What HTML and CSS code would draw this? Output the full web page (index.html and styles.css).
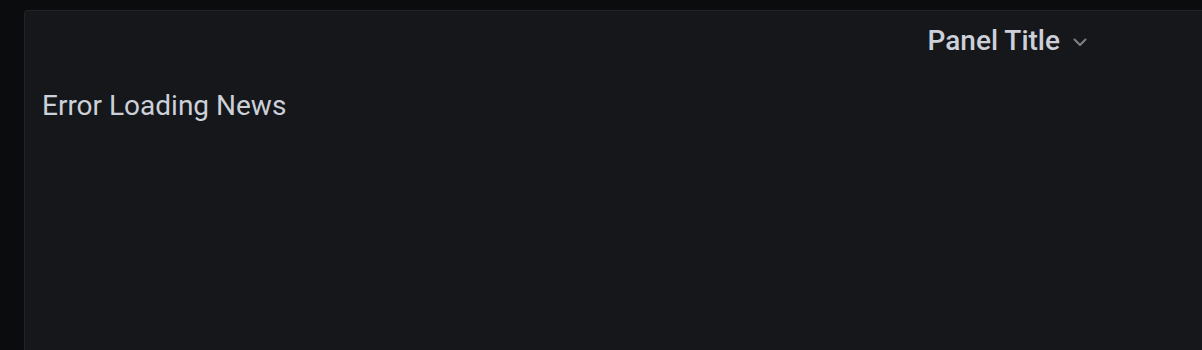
FILE: index.html
```html
<!DOCTYPE html>
<html>
<head>
<meta charset="utf-8">
<link rel="stylesheet" href="styles.css">
</head>
<body>
<div class="panel">
  <div class="header">
    <span class="title">Panel Title</span>
    <svg class="chev" width="14" height="9" viewBox="0 0 14 9"><path d="M1.5 1.5 L7 7 L12.5 1.5" fill="none" stroke="#7f8087" stroke-width="2" stroke-linecap="round" stroke-linejoin="round"/></svg>
  </div>
  <div class="content">Error Loading News</div>
</div>
</body>
</html>
```
FILE: styles.css
```css
html, body {
  margin: 0;
  padding: 0;
  background: #0b0c0e;
  overflow: hidden;
  height: 350px;
}
.panel {
  margin: 10px 0 0 24px;
  height: 340px;
  background: #16171b;
  border: 1px solid #222327;
  border-right: none;
  border-bottom: none;
  border-radius: 4px 0 0 0;
  box-sizing: border-box;
  font-family: Roboto, "Liberation Sans", sans-serif;
}
.header {
  display: flex;
  justify-content: flex-end;
  align-items: center;
  gap: 13px;
  padding: 13px 115px 0 0;
  height: 33px;
}
.title {
  font-size: 28px;
  font-weight: 500;
  color: #ccd0d9;
  line-height: 33px;
}
.chev {
  margin-top: 3px;
}
.content {
  padding: 32px 17px 0;
  font-size: 28px;
  line-height: 33px;
  color: #ccd0d9;
}
```
